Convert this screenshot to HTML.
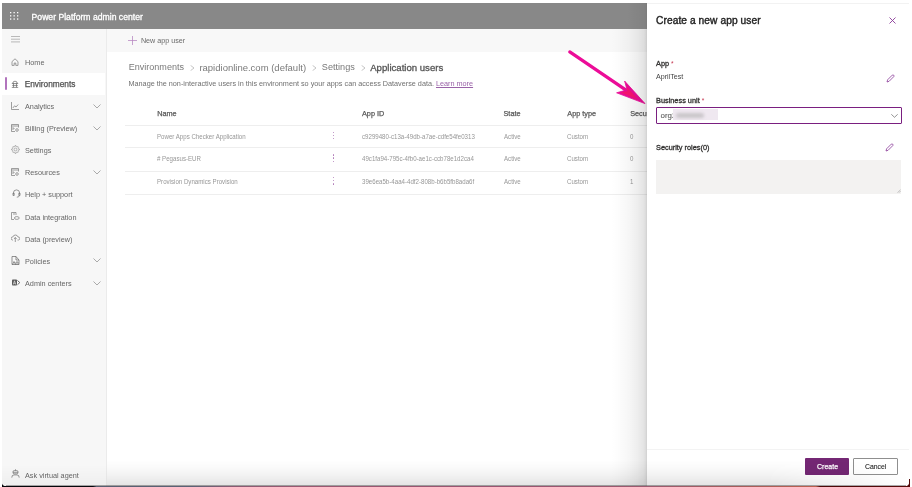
<!DOCTYPE html>
<html><head><meta charset="utf-8">
<style>
*{margin:0;padding:0;box-sizing:border-box}
html,body{width:912px;height:487px;overflow:hidden;background:#fff;font-family:"Liberation Sans",sans-serif;position:relative}
.abs{position:absolute}
.txt{position:absolute;white-space:nowrap;line-height:1}
.sx{display:inline-block;transform-origin:0 0}
#bottom{left:2px;top:479px;width:908px;height:8px;background:linear-gradient(90deg,#040408 0px,#06070c 91px,#585e70 94.5px,#5c6276 190px,#8a5a72 230px,#9a5870 300px,#9a5470 500px,#9c5a6e 650px,#a85c5a 740px,#bc5f4e 814px,#4c0707 818px,#560a0a 900px)}
#win{will-change:transform;left:2px;top:3px;width:907px;height:482.6px;background:#fff;overflow:hidden;border-radius:0 0 4px 4px}
#hdr{left:0;top:0;width:645px;height:25.6px;background:#888}
#side{left:0;top:25.6px;width:105px;height:457.4px;background:#f7f7f7;border-right:1px solid #ebebeb}
.ni{position:absolute;left:0;width:103px;height:22px}
.ni .txt{left:22.7px;top:8.3px;font-size:8.1px;color:#666}
.ni .txt .sx{transform:scaleX(0.9)}
.ni.sel{background:#fff}
.ni.sel .txt{top:7.3px;color:#505050;font-size:8.3px;-webkit-text-stroke:0.25px currentColor}
.ni.sel .txt .sx{transform:none}
.ni svg.ic{position:absolute;left:9.4px;top:7px}
.ni svg.chev{position:absolute;left:91.4px;top:9px}
#cmd{left:105px;top:25.6px;width:540px;height:23px;background:#f8f8f8}
#panel{left:645px;top:0;width:263px;height:483px;background:#fff}
#pshadow{left:609px;top:25.6px;width:36px;height:457.4px;background:linear-gradient(90deg,rgba(0,0,0,0) 0px,rgba(0,0,0,.012) 8px,rgba(0,0,0,.035) 18px,rgba(0,0,0,.07) 27px,rgba(0,0,0,.11) 33px,rgba(0,0,0,.15) 35px,rgba(0,0,0,.19) 36px)}
#shade{left:105px;top:457px;width:803px;height:26px;background:linear-gradient(180deg,rgba(0,0,0,0) 0%,rgba(0,0,0,.02) 30%,rgba(0,0,0,.06) 65%,rgba(0,0,0,.11) 100%);pointer-events:none;-webkit-mask-image:linear-gradient(90deg,#000 0px,#000 660px,rgba(0,0,0,.3) 760px,rgba(0,0,0,0) 803px)}
#shade2{left:0;top:462px;width:105px;height:21px;background:linear-gradient(180deg,rgba(0,0,0,0) 0%,rgba(0,0,0,.035) 100%);pointer-events:none}
.hd{font-size:7.3px;color:#5a5a5a;-webkit-text-stroke:0.25px currentColor}
.cell{font-size:6.6px;color:#979797}
.cell .sx{transform:scaleX(0.93)}
.rowline{position:absolute;left:123px;width:522px;height:1px;background:#eeeeee}
.dots{position:absolute;left:331px;width:2px}
.dots i{display:block;width:1.2px;height:1.2px;border-radius:50%;background:#b07ab8;margin-bottom:1.9px}
.lbl{font-size:7.35px;color:#323130;-webkit-text-stroke:0.3px currentColor}
.req{color:#c4314b;-webkit-text-stroke:0;font-size:6.5px}
.sb{-webkit-text-stroke:0.3px currentColor}
.bc{color:#7a7a7a}
</style></head><body>
<div class="abs" id="bottom"></div>
<div class="abs" id="win">
  <div class="abs" id="hdr">
    <svg class="abs" style="left:8px;top:9px" width="9" height="8" viewBox="0 0 9 8">
      <g fill="#fff"><rect x="0" y="0" width="1.3" height="1.3"/><rect x="3.5" y="0" width="1.3" height="1.3"/><rect x="7" y="0" width="1.3" height="1.3"/>
      <rect x="0" y="3.2" width="1.3" height="1.3"/><rect x="3.5" y="3.2" width="1.3" height="1.3"/><rect x="7" y="3.2" width="1.3" height="1.3"/>
      <rect x="0" y="6.4" width="1.3" height="1.3"/><rect x="3.5" y="6.4" width="1.3" height="1.3"/><rect x="7" y="6.4" width="1.3" height="1.3"/></g>
    </svg>
    <div class="txt" style="left:29.6px;top:9.8px;font-size:8.65px;color:#fff;-webkit-text-stroke:0.3px #fff">Power Platform admin center</div>
  </div>

  <div class="abs" id="side">
    <svg class="abs" style="left:8.5px;top:7.5px" width="9" height="7" viewBox="0 0 9 7"><path d="M0 0.5H9M0 3.2H9M0 5.9H9" stroke="#a8a8a8" stroke-width="0.8"/></svg>
    <div class="ni" style="top:22px">
      <svg class="ic" width="8" height="8" viewBox="0 0 8 8"><path d="M1 3.6L4 0.8L7 3.6V7.4H4.8V5H3.2V7.4H1Z" fill="none" stroke="#777" stroke-width="0.7"/></svg>
      <div class="txt"><span class="sx">Home</span></div></div>
    <div class="ni sel" style="top:44.1px">
      <div class="abs" style="left:3px;top:4.6px;width:2px;height:12.5px;background:#b274bd;border-radius:1px"></div>
      <svg class="ic" width="8" height="8" viewBox="0 0 8 8"><path d="M2 3.5V2Q4 0.3 6 2V3.5M0.8 3.5H7.2M1.2 5.4H6.8M0.8 7.4H7.2M2.5 3.5V7.4M5.5 3.5V7.4" fill="none" stroke="#666" stroke-width="0.7"/></svg>
      <div class="txt"><span class="sx">Environments</span></div></div>
    <div class="ni" style="top:66.2px">
      <svg class="ic" width="8" height="8" viewBox="0 0 8 8"><path d="M0.5 0V7.5H8M1.8 6L3.6 3.8L5 5L7.2 2.5" fill="none" stroke="#777" stroke-width="0.7"/></svg>
      <div class="txt"><span class="sx">Analytics</span></div>
      <svg class="chev" width="8" height="5" viewBox="0 0 8 5"><path d="M0.5 0.5L4 4L7.5 0.5" fill="none" stroke="#888" stroke-width="0.7"/></svg></div>
    <div class="ni" style="top:88.3px">
      <svg class="ic" width="8" height="8" viewBox="0 0 8 8"><path d="M0.5 0.5H7.5V3.5M0.5 0.5V7.5H4M0.5 2H7.5M2 3.5V6M2 3.5L3.5 5" fill="none" stroke="#777" stroke-width="0.7"/><circle cx="6" cy="6" r="1.3" fill="none" stroke="#777" stroke-width="0.7"/></svg>
      <div class="txt"><span class="sx">Billing (Preview)</span></div>
      <svg class="chev" width="8" height="5" viewBox="0 0 8 5"><path d="M0.5 0.5L4 4L7.5 0.5" fill="none" stroke="#888" stroke-width="0.7"/></svg></div>
    <div class="ni" style="top:110.4px">
      <svg class="ic" width="9" height="9" viewBox="0 0 9 9" style="left:9px;top:6px"><path d="M7.43 3.85 L8.37 3.99 L8.37 5.01 L7.43 5.15 L7.03 6.11 L7.59 6.88 L6.88 7.59 L6.11 7.03 L5.15 7.43 L5.01 8.37 L3.99 8.37 L3.85 7.43 L2.89 7.03 L2.12 7.59 L1.41 6.88 L1.97 6.11 L1.57 5.15 L0.63 5.01 L0.63 3.99 L1.57 3.85 L1.97 2.89 L1.41 2.12 L2.12 1.41 L2.89 1.97 L3.85 1.57 L3.99 0.63 L5.01 0.63 L5.15 1.57 L6.11 1.97 L6.88 1.41 L7.59 2.12 L7.03 2.89Z" fill="none" stroke="#8a8a8a" stroke-width="0.6" stroke-linejoin="round"/><circle cx="4.5" cy="4.5" r="1.4" fill="none" stroke="#8a8a8a" stroke-width="0.6"/></svg>
      <div class="txt"><span class="sx">Settings</span></div></div>
    <div class="ni" style="top:132.5px">
      <svg class="ic" width="8" height="8" viewBox="0 0 8 8"><path d="M0.5 0.5H7.5V3.5M0.5 0.5V7.5H4M0.5 2H7.5M2 3.5V6M2 3.5L3.5 5" fill="none" stroke="#777" stroke-width="0.7"/><circle cx="6" cy="6" r="1.3" fill="none" stroke="#777" stroke-width="0.7"/></svg>
      <div class="txt"><span class="sx">Resources</span></div>
      <svg class="chev" width="8" height="5" viewBox="0 0 8 5"><path d="M0.5 0.5L4 4L7.5 0.5" fill="none" stroke="#888" stroke-width="0.7"/></svg></div>
    <div class="ni" style="top:154.6px">
      <svg class="ic" width="9" height="9" viewBox="0 0 9 9" style="left:9.6px;top:6.2px"><path d="M1.4 5.5V4A3.1 3.1 0 0 1 7.6 4V5.5M1 4.2H2.2V6.5H1ZM6.8 4.2H8V6.5H6.8ZM7.4 6.5Q7.2 8.2 4.8 8.2" fill="none" stroke="#707070" stroke-width="0.7"/></svg>
      <div class="txt"><span class="sx">Help + support</span></div></div>
    <div class="ni" style="top:176.7px">
      <svg class="ic" width="9" height="8" viewBox="0 0 9 8"><path d="M5 3V0.5H0.5V7.5H3M2 2H4" fill="none" stroke="#777" stroke-width="0.7"/><ellipse cx="5.8" cy="6" rx="2.4" ry="1.4" fill="none" stroke="#777" stroke-width="0.7"/></svg>
      <div class="txt"><span class="sx">Data integration</span></div></div>
    <div class="ni" style="top:198.8px">
      <svg class="ic" width="9" height="8" viewBox="0 0 9 8"><path d="M2 6H1.5A1.5 1.5 0 0 1 1.8 3A2.7 2.7 0 0 1 7 3A1.5 1.5 0 0 1 7.5 6H6.5M4.3 3.5V8M3 5L4.3 3.5L5.6 5" fill="none" stroke="#777" stroke-width="0.7"/></svg>
      <div class="txt"><span class="sx">Data (preview)</span></div></div>
    <div class="ni" style="top:220.9px">
      <svg class="ic" width="9" height="9" viewBox="0 0 9 9"><path d="M5 0.5H1V8.5H8V4L5 0.5V4H8M1.5 8.5L3 5.5L4.5 8.5M5 8.5V6H7V8.5" fill="none" stroke="#666" stroke-width="0.7"/></svg>
      <div class="txt"><span class="sx">Policies</span></div>
      <svg class="chev" width="8" height="5" viewBox="0 0 8 5"><path d="M0.5 0.5L4 4L7.5 0.5" fill="none" stroke="#888" stroke-width="0.7"/></svg></div>
    <div class="ni" style="top:243px">
      <svg class="ic" width="9" height="8" viewBox="0 0 9 8" style="left:9.5px;top:7.2px"><rect x="0" y="0.6" width="5" height="6" rx="0.8" fill="#5a5a5a"/><path d="M1.2 5.6L2.5 1.8L3.8 5.6M1.7 4.3H3.3" fill="none" stroke="#f7f7f7" stroke-width="0.6"/><path d="M5.5 1.5L7.8 3.6L5.5 5.7" fill="none" stroke="#666" stroke-width="1"/></svg>
      <div class="txt"><span class="sx">Admin centers</span></div>
      <svg class="chev" width="8" height="5" viewBox="0 0 8 5"><path d="M0.5 0.5L4 4L7.5 0.5" fill="none" stroke="#888" stroke-width="0.7"/></svg></div>
    <div class="ni" style="top:435.3px">
      <svg class="ic" width="9" height="9" viewBox="0 0 9 9" style="left:9px;top:5.6px"><path d="M4.5 0.3V1.5M2 2.8Q2 1.6 3.2 1.6H5.8Q7 1.6 7 2.8V3.6Q7 4.8 5.8 4.8H3.2Q2 4.8 2 3.6ZM2 3.3H7M0.8 8.6Q0.8 5.9 3 5.9H6Q8.2 5.9 8.2 8.6" fill="none" stroke="#6a6a6a" stroke-width="0.7"/></svg>
      <div class="txt"><span class="sx">Ask virtual agent</span></div></div>
  </div>

  <div class="abs" id="cmd">
    <svg class="abs" style="left:21px;top:7.4px" width="9" height="9" viewBox="0 0 9 9"><path d="M4.5 0V9M0 4.5H9" stroke="#b584c0" stroke-width="0.75"/></svg>
    <div class="txt" style="left:33.9px;top:8.6px;font-size:7.2px;color:#6a6a6a">New app user</div>
  </div>

  <!-- content: win offset (2,3) -->
  <div class="txt bc" style="left:126.7px;top:60px;font-size:9.05px">Environments</div>
  <svg class="abs" style="left:188px;top:61.5px" width="5" height="6" viewBox="0 0 5 6"><path d="M0.6 0.4L4 3L0.6 5.6" fill="none" stroke="#a0a0a0" stroke-width="0.6"/></svg>
  <div class="txt bc" style="left:197.4px;top:59.7px;font-size:9.5px">rapidionline.com (default)</div>
  <svg class="abs" style="left:310px;top:61.5px" width="5" height="6" viewBox="0 0 5 6"><path d="M0.6 0.4L4 3L0.6 5.6" fill="none" stroke="#a0a0a0" stroke-width="0.6"/></svg>
  <div class="txt bc" style="left:319.8px;top:60px;font-size:9.13px">Settings</div>
  <svg class="abs" style="left:358.6px;top:61.5px" width="5" height="6" viewBox="0 0 5 6"><path d="M0.6 0.4L4 3L0.6 5.6" fill="none" stroke="#a0a0a0" stroke-width="0.6"/></svg>
  <div class="txt bc sb" style="left:368.2px;top:59.5px;font-size:9.6px;color:#555">Application users</div>
  <div class="txt" style="left:126.5px;top:76.5px;font-size:7.25px;color:#707070">Manage the non-interactive users in this environment so your apps can access Dataverse data. <span style="color:#9a62a8;text-decoration:underline;text-decoration-thickness:0.6px;text-underline-offset:1px">Learn more</span></div>

  <div class="txt hd" style="left:155.2px;top:107.2px">Name</div>
  <div class="txt hd" style="left:360px;top:107.2px">App ID</div>
  <div class="txt hd" style="left:501.5px;top:107.2px">State</div>
  <div class="txt hd" style="left:565.3px;top:107.2px">App type</div>
  <div class="txt hd" style="left:628.2px;top:107.2px">Secur</div>
  <div class="rowline" style="top:122px"></div>
  <div class="rowline" style="top:144.3px"></div>
  <div class="rowline" style="top:167.5px"></div>
  <div class="rowline" style="top:190.6px"></div>
  <div class="txt cell" style="left:155.2px;top:130.5px"><span class="sx">Power Apps Checker Application</span></div>
  <div class="txt cell" style="left:359.8px;top:130.5px"><span class="sx">c9299480-c13a-49db-a7ae-cdfe54fe0313</span></div>
  <div class="txt cell" style="left:501.8px;top:130.5px"><span class="sx">Active</span></div>
  <div class="txt cell" style="left:565px;top:130.5px"><span class="sx">Custom</span></div>
  <div class="txt cell" style="left:628px;top:130.5px"><span class="sx">0</span></div>
  <div class="dots" style="top:128.6px"><i></i><i></i><i></i></div>
  <div class="txt cell" style="left:155.2px;top:153.2px"><span class="sx"># Pegasus-EUR</span></div>
  <div class="txt cell" style="left:359.8px;top:153.2px"><span class="sx">49c1fa94-795c-4fb0-ae1c-ccb78e1d2ca4</span></div>
  <div class="txt cell" style="left:501.8px;top:153.2px"><span class="sx">Active</span></div>
  <div class="txt cell" style="left:565px;top:153.2px"><span class="sx">Custom</span></div>
  <div class="txt cell" style="left:628px;top:153.2px"><span class="sx">0</span></div>
  <div class="dots" style="top:151.4px"><i></i><i></i><i></i></div>
  <div class="txt cell" style="left:155.2px;top:175.9px"><span class="sx">Provision Dynamics Provision</span></div>
  <div class="txt cell" style="left:359.8px;top:175.9px"><span class="sx">39e6ea5b-4aa4-4df2-808b-b6b5fb8ada6f</span></div>
  <div class="txt cell" style="left:501.8px;top:175.9px"><span class="sx">Active</span></div>
  <div class="txt cell" style="left:565px;top:175.9px"><span class="sx">Custom</span></div>
  <div class="txt cell" style="left:628px;top:175.9px"><span class="sx">1</span></div>
  <div class="dots" style="top:174.2px"><i></i><i></i><i></i></div>

  <!-- arrow -->
  <svg class="abs" style="left:0;top:0" width="908" height="482" viewBox="2 3 908 482">
    <path d="M569.8 51.9L629 92.2" stroke="#ec0c98" stroke-width="3.3" stroke-linecap="round"/>
    <path d="M645 103.6L624.6 81L627 89.8L616.6 92.8Z" fill="#ec0c98" stroke="#ec0c98" stroke-width="0.8" stroke-linejoin="round"/>
    <path d="M638 99.5L626.5 86.5L627.5 91L620.5 92.5Z" fill="#fb1668" opacity="0.8"/>
  </svg>

  <div class="abs" id="pshadow"></div>
  <div class="abs" style="left:625px;top:0;width:20px;height:25.6px;background:linear-gradient(90deg,rgba(0,0,0,0),rgba(0,0,0,.05) 90%,rgba(0,0,0,.09))"></div>
  <div class="abs" id="panel">
    <div class="abs" style="left:0;top:0;width:263px;height:1px;background:#f2f2f2"></div>
    <div class="txt" style="left:9px;top:12.6px;font-size:10.2px;letter-spacing:0.08px;color:#252525;-webkit-text-stroke:0.4px currentColor">Create a new app user</div>
    <svg class="abs" style="left:242.3px;top:13.5px" width="7" height="7" viewBox="0 0 7 7"><path d="M0.5 0.5L6.5 6.5M6.5 0.5L0.5 6.5" stroke="#8a3a98" stroke-width="0.9"/></svg>

    <div class="txt lbl" style="left:9px;top:57.4px">App <span class="req">*</span></div>
    <div class="txt" style="left:9px;top:70.5px;font-size:7.1px;color:#444">AprilTest</div>
    <svg class="abs" style="left:238.6px;top:70.8px" width="9" height="9" viewBox="0 0 9 9"><path d="M1 8L1.6 5.8L6.3 1.1Q7 0.5 7.7 1.2Q8.4 1.9 7.8 2.6L3.1 7.3Z" fill="none" stroke="#8a3a98" stroke-width="0.8" stroke-linejoin="round"/></svg>

    <div class="txt lbl" style="left:9px;top:93.5px">Business unit <span class="req">*</span></div>
    <div class="abs" style="left:9.2px;top:104.3px;width:245.5px;height:16.9px;border:1.3px solid #7a1f80;border-radius:1px"></div>
    <div class="txt" style="left:13.6px;top:109px;font-size:7.9px;color:#444">org2</div>
    <div class="abs" style="left:26px;top:106.2px;width:45px;height:11.3px;background:#efe8f0"></div>
    <div class="abs" style="left:29px;top:109.5px;width:28px;height:5px;background:#cac6ca;border-radius:3px;filter:blur(1.8px)"></div>
    <svg class="abs" style="left:244px;top:110.6px" width="7" height="4" viewBox="0 0 7 4"><path d="M0.3 0.3L3.5 3.3L6.7 0.3" fill="none" stroke="#666" stroke-width="0.7"/></svg>

    <div class="txt lbl" style="left:9px;top:141px">Security roles(0)</div>
    <svg class="abs" style="left:238.4px;top:139.5px" width="9" height="9" viewBox="0 0 9 9"><path d="M1 8L1.6 5.8L6.3 1.1Q7 0.5 7.7 1.2Q8.4 1.9 7.8 2.6L3.1 7.3Z" fill="none" stroke="#8a3a98" stroke-width="0.8" stroke-linejoin="round"/></svg>
    <div class="abs" style="left:9px;top:157px;width:245.4px;height:33.7px;background:#f3f2f1"></div>
    <svg class="abs" style="left:249.5px;top:186px" width="4" height="4" viewBox="0 0 4 4"><path d="M0.5 3.7L3.7 0.5M2 3.7L3.7 2" stroke="#999" stroke-width="0.5"/></svg>

    <div class="abs" style="left:0;top:446px;width:263px;height:1px;background:#f3f3f3"></div>
    <div class="abs" style="left:158.4px;top:455.2px;width:43.5px;height:16.5px;background:#742774;border-radius:1px"></div>
    <div class="txt" style="left:170px;top:460.2px;font-size:7.8px;color:#fff;-webkit-text-stroke:0.25px #fff"><span class="sx" style="transform:scaleX(0.9)">Create</span></div>
    <div class="abs" style="left:206.3px;top:455.2px;width:44.6px;height:16.5px;border:1px solid #8f8f8f;border-radius:1px;background:#fff"></div>
    <div class="txt" style="left:217.6px;top:460.2px;font-size:7.8px;color:#222;-webkit-text-stroke:0.1px #222"><span class="sx" style="transform:scaleX(0.88)">Cancel</span></div>
  </div>
  <div class="abs" id="shade"></div>
  <div class="abs" id="shade2"></div>
</div>
<div class="abs" style="left:6px;top:485px;width:900px;height:1px;background:rgba(70,70,70,.45)"></div>
</body></html>
